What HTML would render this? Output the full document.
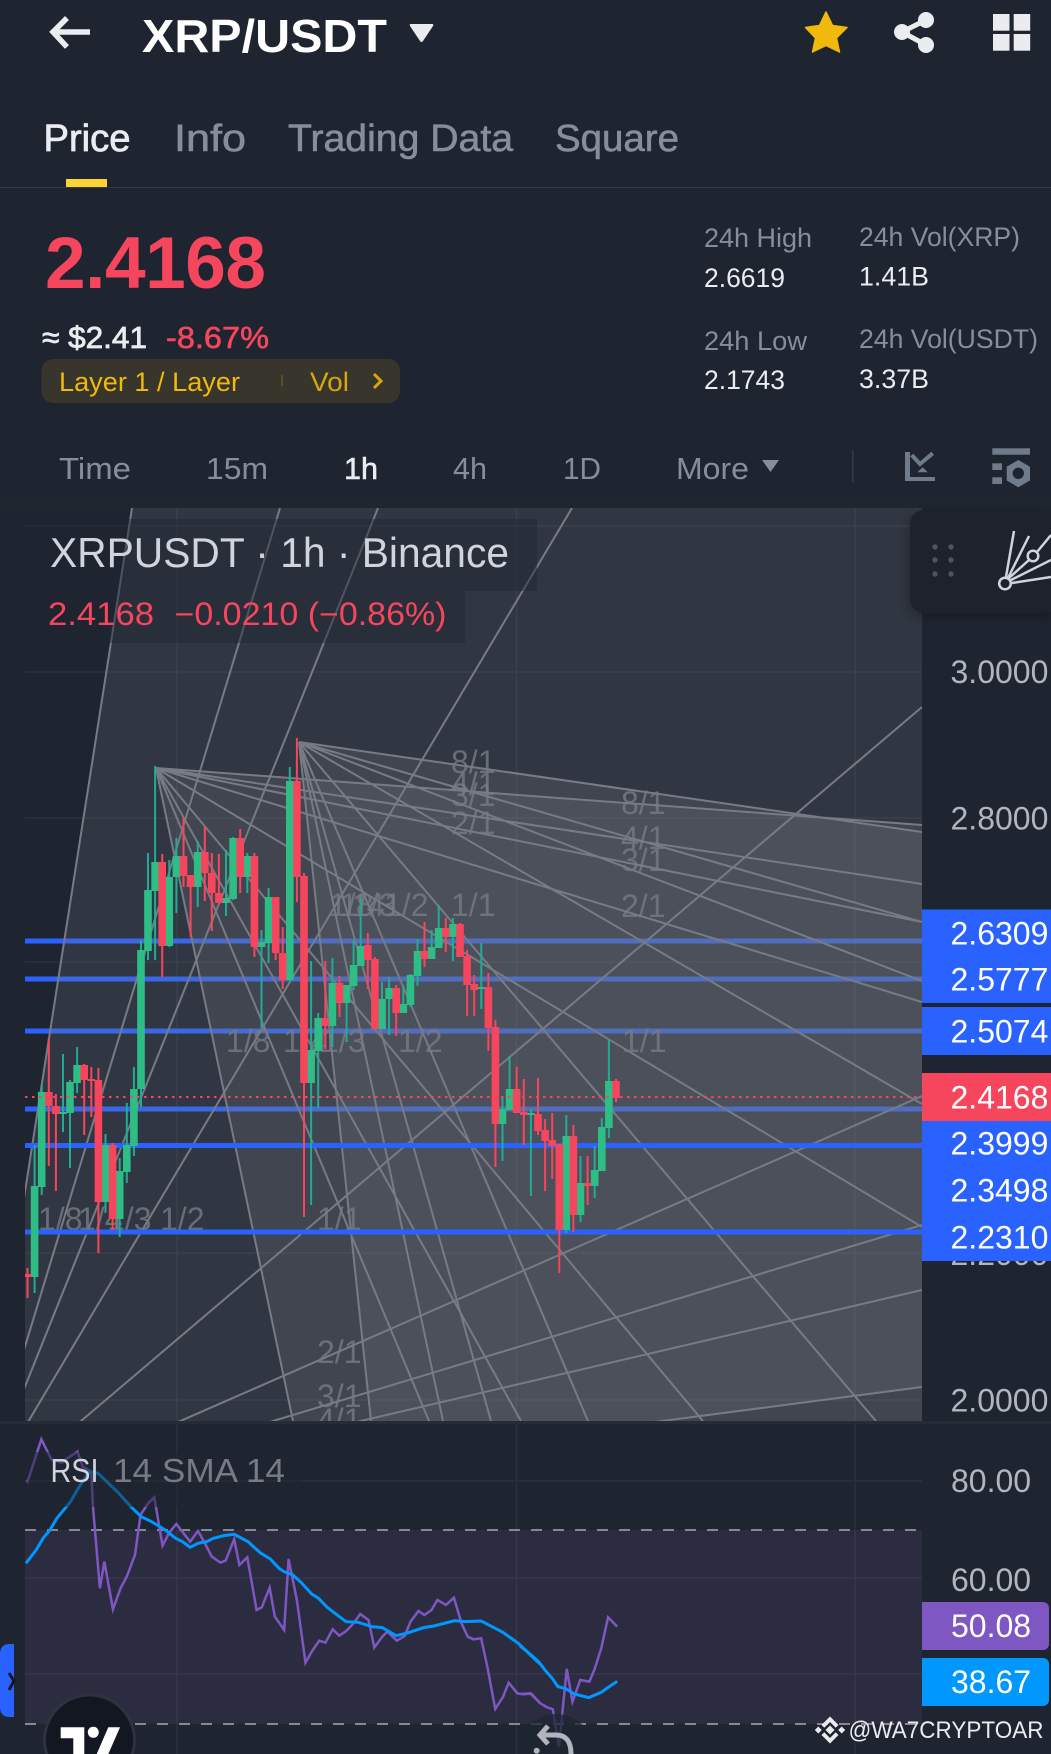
<!DOCTYPE html>
<html><head><meta charset="utf-8"><title>XRP/USDT</title>
<style>
html,body{margin:0;padding:0;background:#1e2530}
svg{display:block}
text{font-family:"Liberation Sans",sans-serif}
</style></head><body>
<svg xmlns="http://www.w3.org/2000/svg" width="1051" height="1754" viewBox="0 0 1051 1754">
<defs>
<clipPath id="ch"><rect x="25" y="508" width="897" height="913"/></clipPath>
<clipPath id="rs"><rect x="25" y="1424" width="897" height="330"/></clipPath>
<filter id="sh" x="-20%" y="-20%" width="140%" height="150%"><feGaussianBlur stdDeviation="6"/></filter>
</defs>
<rect width="1051" height="1754" fill="#1e2530"/>

<!-- Header -->
<path d="M90 32H54M67 18L53 32L67 47" fill="none" stroke="#eaecef" stroke-width="5.500"/>
<text x="142" y="52" font-size="46" font-weight="700" fill="#fff" textLength="245" lengthAdjust="spacingAndGlyphs">XRP/USDT</text>
<path d="M411 24H432Q434 24 433 26L423 41Q421.500 43 420 41L410 26Q409 24 411 24Z" fill="#eaecef"/>
<path d="M826 12L832.500 25.500L847 27.500L836.500 38L839.500 52L826 45.500L812.500 52L815.500 38L805.500 27.500L819.500 25.500Z" fill="#f0b90b" stroke="#f0b90b" stroke-width="1.500" stroke-linejoin="round"/>
<path d="M926 20L902 32L926 45" fill="none" stroke="#eaecef" stroke-width="5"/>
<circle cx="926" cy="20" r="8" fill="#eaecef"/><circle cx="902" cy="32" r="8" fill="#eaecef"/><circle cx="926" cy="45" r="8" fill="#eaecef"/>
<g fill="#eaecef"><rect x="993" y="14" width="16.500" height="16.700"/><rect x="1013.700" y="14" width="16.500" height="16.700"/><rect x="993" y="34" width="16.500" height="16.700"/><rect x="1013.700" y="34" width="16.500" height="16.700"/></g>

<!-- Tabs -->
<text x="43.500" y="151" font-size="38" fill="#eaecef" stroke="#eaecef" stroke-width=".8" textLength="87" lengthAdjust="spacingAndGlyphs">Price</text>
<g font-size="38" fill="#848e9c" stroke="#848e9c" stroke-width=".6">
<text x="174" y="151" textLength="72" lengthAdjust="spacingAndGlyphs">Info</text>
<text x="288" y="151" textLength="225" lengthAdjust="spacingAndGlyphs">Trading Data</text>
<text x="555" y="151" textLength="124" lengthAdjust="spacingAndGlyphs">Square</text>
</g>
<rect x="66" y="179" width="41" height="8" fill="#fcd535"/>
<rect x="0" y="187" width="1051" height="1" fill="#333a45"/>

<!-- Price block -->
<text x="45" y="288" font-size="73" font-weight="700" fill="#f6465d" textLength="221" lengthAdjust="spacing">2.4168</text>
<text x="42" y="348" font-size="31" fill="#eaecef" stroke="#eaecef" stroke-width=".8" textLength="105" lengthAdjust="spacingAndGlyphs">≈ $2.41</text>
<text x="166" y="348" font-size="31" fill="#f6465d" stroke="#f6465d" stroke-width=".6" textLength="103" lengthAdjust="spacingAndGlyphs">-8.67%</text>
<rect x="41.500" y="359" width="358.500" height="44" rx="12" fill="#38352c"/>
<text x="59" y="391" font-size="27" fill="#f0b90b" textLength="181" lengthAdjust="spacingAndGlyphs">Layer 1 / Layer</text>
<rect x="281" y="375" width="2" height="11" fill="#5d4f1f"/>
<text x="310" y="391" font-size="27" fill="#d9a60a" textLength="39" lengthAdjust="spacingAndGlyphs">Vol</text>
<path d="M374 374L381 381L374 388" fill="none" stroke="#d9a60a" stroke-width="3"/>
<g font-size="27" fill="#848e9c">
<text x="704" y="247" textLength="108" lengthAdjust="spacingAndGlyphs">24h High</text>
<text x="859" y="246" textLength="161" lengthAdjust="spacingAndGlyphs">24h Vol(XRP)</text>
<text x="704" y="350" textLength="103" lengthAdjust="spacingAndGlyphs">24h Low</text>
<text x="859" y="348" textLength="179" lengthAdjust="spacingAndGlyphs">24h Vol(USDT)</text>
</g>
<g font-size="27" fill="#eaecef">
<text x="704" y="287" textLength="81" lengthAdjust="spacingAndGlyphs">2.6619</text>
<text x="859" y="285.500" textLength="70" lengthAdjust="spacingAndGlyphs">1.41B</text>
<text x="704" y="389" textLength="81" lengthAdjust="spacingAndGlyphs">2.1743</text>
<text x="859" y="388" textLength="70" lengthAdjust="spacingAndGlyphs">3.37B</text>
</g>

<!-- Interval row -->
<g font-size="31" fill="#848e9c">
<text x="59" y="479" textLength="72" lengthAdjust="spacingAndGlyphs">Time</text>
<text x="206" y="479" textLength="62" lengthAdjust="spacingAndGlyphs">15m</text>
<text x="453" y="479" textLength="34" lengthAdjust="spacingAndGlyphs">4h</text>
<text x="563" y="479" textLength="38" lengthAdjust="spacingAndGlyphs">1D</text>
<text x="676" y="479" textLength="73" lengthAdjust="spacingAndGlyphs">More</text>
</g>
<text x="344" y="479" font-size="31" fill="#eaecef" stroke="#eaecef" stroke-width=".6" textLength="34" lengthAdjust="spacingAndGlyphs">1h</text>
<path d="M762 460H779L770.500 472Z" fill="#848e9c"/>
<rect x="852" y="450" width="1.500" height="33" fill="#333a45"/>
<path d="M905 452h5v25h25v4h-30Z" fill="#6f7a8a"/>
<path d="M911.700 455L920 464L932.700 453.300" fill="none" stroke="#6f7a8a" stroke-width="4"/>
<path d="M922.700 467.300L917.300 472.300H927.700Z" fill="#6f7a8a"/>
<g fill="#6f7a8a"><rect x="992.300" y="448.300" width="37.700" height="6.400"/><rect x="992.300" y="463.300" width="9.700" height="6.700"/><rect x="992.300" y="477.300" width="9.700" height="6.700"/>
<path fill-rule="evenodd" d="M1018.300 460L1030 466.700V480.500L1018.300 487.300L1006.700 480.500V466.700ZM1018.300 467.600a5.700 5.700 0 1 0 .01 0Z"/></g>

<!-- Main chart -->
<rect x="0" y="500" width="1051" height="8" fill="#1e2630"/>
<g clip-path="url(#ch)">
<path d="M25 526H922M25 672H922M25 818H922M25 962H922M25 1108H922M25 1253H922M25 1400H922M177 508V1421M516.500 508V1421M855 508V1421" stroke="#fff" stroke-opacity=".06" stroke-width="1.500" fill="none"/>
<g fill="#2962ff"><rect x="25" y="938.500" width="897" height="5"/><rect x="25" y="976.500" width="897" height="5"/><rect x="25" y="1028.500" width="897" height="5"/><rect x="25" y="1106.500" width="897" height="5"/></g>
<g fill="#787b86" fill-opacity=".22">
<path d="M-25 1511L132 508H922V1387Z"/>
<path d="M156 768L922 825V1421H293Z"/>
<path d="M299 742L922 832V1421H371Z"/>
</g>
<path fill="none" stroke="#787b86" stroke-width="2" d="M-25 1511L132 508M-25 1511L280 508M-25 1511L378 508M-25 1511L572 508M-25 1511L922 707M-25 1511L922 1096M-25 1511L922 1225M-25 1511L922 1290M-25 1511L922 1387M156 768L922 825M156 768L922 884M156 768L922 922M156 768L922 1002M156 768L922 1227M156 768L703 1421M156 768L521 1421M156 768L429 1421M156 768L293 1421M299 742L922 832M299 742L922 922M299 742L922 981M299 742L922 1104M299 742L876 1421M299 742L588 1421M299 742L491 1421M299 742L443 1421M299 742L371 1421"/>
<g font-size="32" fill="#787b86" fill-opacity=".8">
<text x="451" y="773">8/1</text><text x="451" y="795">4/1</text><text x="451" y="806">3/1</text><text x="451" y="834">2/1</text>
<text x="621" y="814">8/1</text><text x="621" y="849">4/1</text><text x="621" y="871">3/1</text><text x="621" y="917">2/1</text>
<text x="451" y="916">1/1</text><text x="329" y="916">1/8</text><text x="340" y="916">1/4</text><text x="352" y="916">1/3</text><text x="384" y="916">1/2</text>
<text x="226" y="1052">1/8</text><text x="283" y="1052">1/4</text><text x="321" y="1052">1/3</text><text x="398" y="1052">1/2</text><text x="622" y="1052">1/1</text>
<text x="38" y="1230">1/8</text><text x="78" y="1230">1/4</text><text x="107" y="1230">1/3</text><text x="160" y="1230">1/2</text><text x="317" y="1230">1/1</text>
<text x="317" y="1363">2/1</text><text x="317" y="1407">3/1</text><text x="317" y="1431">4/1</text>
</g>
<rect x="25" y="1143" width="897" height="5" fill="#2962ff"/>
<rect x="25" y="1229.500" width="897" height="5" fill="#2962ff"/>

<!-- green wicks -->
<path fill="none" stroke="#22ab94" stroke-width="2" d="M34.600 1145V1293M41.700 1085V1195M63 1054V1132M70 1080V1168M77.100 1047V1093M105.500 1134V1213M119.700 1158V1237M126.800 1103V1183M133.900 1067V1156M141 940V1107M148 853V960M155.100 766V960M169.300 860V947M176.400 838V913M197.700 841V907M226 850V916M233.100 837V900M247.300 853V893M261.500 930V1028M268.600 888V963M289.800 767V982M311.100 961V1205M318.200 1013V1108M332.400 958V1047M346.600 985V1042M353.600 940V990M360.700 898V966M382 982V1029M389.100 977V1035M403.300 985V1013M410.400 974V1007M417.500 939V986M431.600 930V959M438.700 905V948M452.900 918V961M481.300 943V1009M502.500 1096V1161M509.600 1056V1110M530.900 1109V1196M566.300 1115V1233M580.500 1156V1222M594.700 1146V1198M601.800 1118V1171M608.900 1040V1138"/>
<!-- red wicks -->
<path fill="none" stroke="#f6465d" stroke-width="2" d="M27.500 1268V1298M48.800 1038V1166M55.900 1094V1191M84.200 1064V1135M91.300 1067V1117M98.400 1068V1253M112.600 1143V1230M162.200 854V977M183.500 818V887M190.600 875V937M204.800 826V901M211.800 853V931M218.900 854V903M240.200 829V893M254.400 853V957M275.700 897V960M282.700 927V989M296.900 738V902M304 873V1217M325.300 961V1049M339.500 976V1017M367.800 933V989M374.900 957V1029M396.200 985V1036M424.500 922V967M445.800 918V952M460 923V957M467.100 950V1016M474.200 975V1016M488.400 973V1051M495.400 1020V1167M516.700 1067V1113M523.800 1079V1145M538 1078V1135M545.100 1119V1191M552.200 1113V1179M559.300 1144V1273M573.400 1125V1232M587.600 1156V1205M616 1079V1102"/>
<!-- green bodies -->
<path fill="none" stroke="#2ebd85" stroke-width="7.600" d="M34.600 1186V1277M41.700 1092V1187M63 1112V1114M70 1082V1113M77.100 1065V1083M105.500 1145V1202M119.700 1171V1219M126.800 1145V1172M133.900 1089V1146M141 950V1089M148 890V951M155.100 862V891M169.300 877V946M176.400 856V877M197.700 852V887M226 898V903M233.100 838V899M247.300 856V877M261.500 942V947M268.600 897V943M289.800 781V980M311.100 1050V1083M318.200 1018V1051M332.400 983V1026M346.600 985V1003M353.600 965V986M360.700 946V966M382 999V1029M389.100 988V999M403.300 1004V1013M410.400 975V1005M417.500 951V976M431.600 947V959M438.700 928V948M452.900 924V937M481.300 987V989M502.500 1109V1124M509.600 1089V1110M530.900 1113V1115M566.300 1136V1230M580.500 1183V1215M594.700 1170V1186M601.800 1127V1171M608.900 1081V1128"/>
<!-- red bodies -->
<path fill="none" stroke="#f6465d" stroke-width="7.600" d="M27.500 1274V1277M48.800 1092V1106M55.900 1106V1114M84.200 1065V1080M91.300 1079V1081M98.400 1080V1202M112.600 1145V1219M162.200 862V946M183.500 856V876M190.600 875V887M204.800 852V873M211.800 873V893M218.900 893V903M240.200 838V877M254.400 856V947M275.700 897V953M282.700 953V980M296.900 781V877M304 876V1083M325.300 1018V1026M339.500 983V1003M367.800 945V960M374.900 959V1029M396.200 988V1013M424.500 951V959M445.800 928V937M460 924V957M467.100 956V985M474.200 984V990M488.400 987V1028M495.400 1027V1124M516.700 1089V1113M523.800 1112V1115M538 1114V1131M545.100 1130V1141M552.200 1140V1146M559.300 1144V1230M573.400 1136V1215M587.600 1183V1186M616 1081V1098"/>
<path d="M25 1097H922" stroke="#f6465d" stroke-width="2" stroke-dasharray="2.500 4.500" fill="none"/>
<!-- legend backgrounds -->
<rect x="25" y="519" width="512" height="72" fill="#1e2530" fill-opacity=".45"/>
<rect x="25" y="591" width="440" height="52" fill="#1e2530" fill-opacity=".45"/>
</g>
<text x="50" y="567" font-size="42" fill="#d1d4dc" textLength="459" lengthAdjust="spacingAndGlyphs">XRPUSDT · 1h · Binance</text>
<text x="48" y="625" font-size="32" fill="#f6465d" textLength="106" lengthAdjust="spacingAndGlyphs">2.4168</text>
<text x="174.500" y="625" font-size="32" fill="#f6465d" textLength="272" lengthAdjust="spacingAndGlyphs">−0.0210 (−0.86%)</text>

<!-- Price axis -->
<rect x="922" y="508" width="129" height="913" fill="#1e2530"/>
<g font-size="32" fill="#b2b5be">
<text x="950.500" y="683">3.0000</text><text x="950.500" y="829.500">2.8000</text><text x="950.500" y="1265">2.2000</text><text x="950.500" y="1411.500">2.0000</text>
</g>
<rect x="922" y="909.500" width="129" height="93.500" fill="#2962ff"/>
<rect x="922" y="1007" width="129" height="48" fill="#2962ff"/>
<rect x="922" y="1121" width="129" height="140" fill="#2962ff"/>
<rect x="922" y="1073" width="129" height="48" fill="#f6465d"/>
<g font-size="32" fill="#fff">
<text x="950.500" y="944.500">2.6309</text><text x="950.500" y="990.500">2.5777</text><text x="950.500" y="1042.500">2.5074</text><text x="950.500" y="1108.500">2.4168</text><text x="950.500" y="1154.500">2.3999</text><text x="950.500" y="1201.500">2.3498</text><text x="950.500" y="1248.500">2.2310</text>
</g>

<!-- Drawing toolbar -->
<rect x="908" y="514" width="150" height="103" rx="14" fill="#000" fill-opacity=".3" filter="url(#sh)"/>
<rect x="910" y="510" width="150" height="103" rx="14" fill="#1e222d"/>
<g fill="#50535e"><circle cx="935" cy="547" r="2.700"/><circle cx="951" cy="547" r="2.700"/><circle cx="935" cy="560" r="2.700"/><circle cx="951" cy="560" r="2.700"/><circle cx="935" cy="574" r="2.700"/><circle cx="951" cy="574" r="2.700"/></g>
<g fill="none" stroke="#d1d4dc" stroke-width="2.500">
<path d="M1006 577L1014 531M1008 578L1029 536M1011 580L1051 560M1012 583L1051 577M1037 552L1051 535M1009 578L1029 560"/>
<circle cx="1005" cy="583.500" r="5.800"/><circle cx="1033" cy="556" r="5.300"/>
</g>

<!-- RSI pane -->
<rect x="0" y="1421" width="1051" height="3" fill="#262c36"/>
<rect x="25" y="1530" width="897" height="194" fill="#2c2c40"/>
<path d="M25 1481H922M25 1578H922M25 1674H922M177 1424V1754M516.500 1424V1754M855 1424V1754" stroke="#fff" stroke-opacity=".06" stroke-width="1.500" fill="none"/>
<path d="M25 1530H922M25 1724H922" stroke="#868993" stroke-width="2" stroke-dasharray="11 11" fill="none"/>
<g clip-path="url(#rs)">
<g transform="translate(0,1400) scale(.3444,.3333)">
<polyline fill="none" stroke="#7e57c2" stroke-width="2.500" vector-effect="non-scaling-stroke" points="75,240 80,245 120,118 150,180 180,188 195,175 225,155 240,200 265,215 270,320 290,565 303,485 328,628 350,565 368,530 392,465 408,345 430,310 448,292 472,437 492,397 512,372 552,425 575,393 595,430 615,470 640,488 655,482 680,418 695,495 718,472 745,630 760,622 783,563 798,650 825,690 838,477 862,600 887,788 905,755 927,722 945,728 966,688 985,707 1005,693 1025,672 1046,642 1070,660 1087,743 1110,710 1125,695 1152,722 1175,708 1192,665 1215,633 1232,645 1253,630 1270,600 1295,615 1318,593 1340,670 1358,710 1375,718 1397,715 1415,800 1438,927 1460,892 1477,848 1502,880 1520,883 1543,881 1568,910"/>
<polyline fill="none" stroke="#0098ff" stroke-width="3" vector-effect="non-scaling-stroke" points="75,490 105,450 125,415 145,390 165,355 205,305 230,260 260,215 285,220 315,250 345,280 380,320 410,350 440,365 480,390 510,415 530,425 552,442 575,430 600,425 620,415 650,407 680,403 720,425 755,458 785,477 810,505 825,515 850,525 875,548 905,582 925,595 950,622 975,642 1005,665 1040,667 1080,680 1110,683 1150,707 1180,700 1230,683 1260,678 1320,662 1350,665 1397,663 1460,697 1505,730 1530,755 1568,792"/>
</g>
<g transform="translate(520,1400) scale(.33866,.3333)">
<polyline fill="none" stroke="#7e57c2" stroke-width="2.500" vector-effect="non-scaling-stroke" points="0,882 30,880 60,910 80,922 97,928 115,1040 138,807 155,905 178,840 205,845 220,808 240,745 260,652 287,680"/>
<polyline fill="none" stroke="#0098ff" stroke-width="3" vector-effect="non-scaling-stroke" points="0,738 30,762 55,785 75,812 95,835 112,860 135,866 160,882 203,893 240,877 255,866 287,844"/>
</g>
<rect x="25" y="1452" width="275" height="55" fill="#1e2530" fill-opacity=".5"/>
</g>
<text x="50.500" y="1482" font-size="33" fill="#d1d4dc" textLength="48" lengthAdjust="spacingAndGlyphs">RSI</text>
<text x="113" y="1482" font-size="33" fill="#787b86" textLength="172" lengthAdjust="spacingAndGlyphs">14 SMA 14</text>
<text x="951" y="1492" font-size="32" fill="#b2b5be">80.00</text>
<text x="951" y="1591" font-size="32" fill="#b2b5be">60.00</text>
<path d="M922 1602H1043a6 6 0 0 1 6 6V1644a6 6 0 0 1 -6 6H922Z" fill="#7e57c2"/>
<path d="M922 1658H1043a6 6 0 0 1 6 6V1700a6 6 0 0 1 -6 6H922Z" fill="#0098ff"/>
<text x="951" y="1637" font-size="32" fill="#fff">50.08</text>
<text x="951" y="1693" font-size="32" fill="#fff">38.67</text>

<!-- Left collapse tab -->
<path d="M14 1644V1717H10Q0 1717 0 1707V1654Q0 1644 10 1644Z" fill="#2962ff"/>
<path d="M9 1673L14 1681L9 1690" fill="none" stroke="#131722" stroke-width="3"/>

<!-- TradingView logo -->
<circle cx="89.500" cy="1740" r="45" fill="#131722" stroke="#2e3240" stroke-width="3"/>
<path d="M60.700 1727.300H84.300V1754H73.300V1738.300H60.700Z" fill="#fff"/>
<circle cx="93.300" cy="1732.300" r="5.500" fill="#fff"/>
<path d="M108.300 1727.300H120L108.300 1754H96.700Z" fill="#fff"/>

<!-- Undo -->
<circle cx="556" cy="1752" r="38" fill="#1e2530" fill-opacity=".75"/>
<path d="M548 1726L540 1735L548 1744M541 1735H556Q571 1735 571 1754" fill="none" stroke="#b2b5be" stroke-width="5"/>
<circle cx="536.700" cy="1750.700" r="3" fill="#b2b5be"/>

<!-- Watermark -->
<g fill="#eaecef">
<path d="M830 1725.500L834.500 1730L830 1734.500L825.500 1730Z"/>
<path d="M818.300 1726.500L821.800 1730L818.300 1733.500L814.800 1730Z"/>
<path d="M841.700 1726.500L845.200 1730L841.700 1733.500L838.200 1730Z"/>
<path d="M830 1716.500L838.500 1725L835.700 1727.800L830 1722L824.300 1727.800L821.500 1725Z"/>
<path d="M830 1743.500L838.500 1735L835.700 1732.200L830 1738L824.300 1732.200L821.500 1735Z"/>
</g>
<text x="848.500" y="1738" font-size="24" fill="#eaecef" textLength="195" lengthAdjust="spacingAndGlyphs">@WA7CRYPTOAR</text>
</svg>
</body></html>
